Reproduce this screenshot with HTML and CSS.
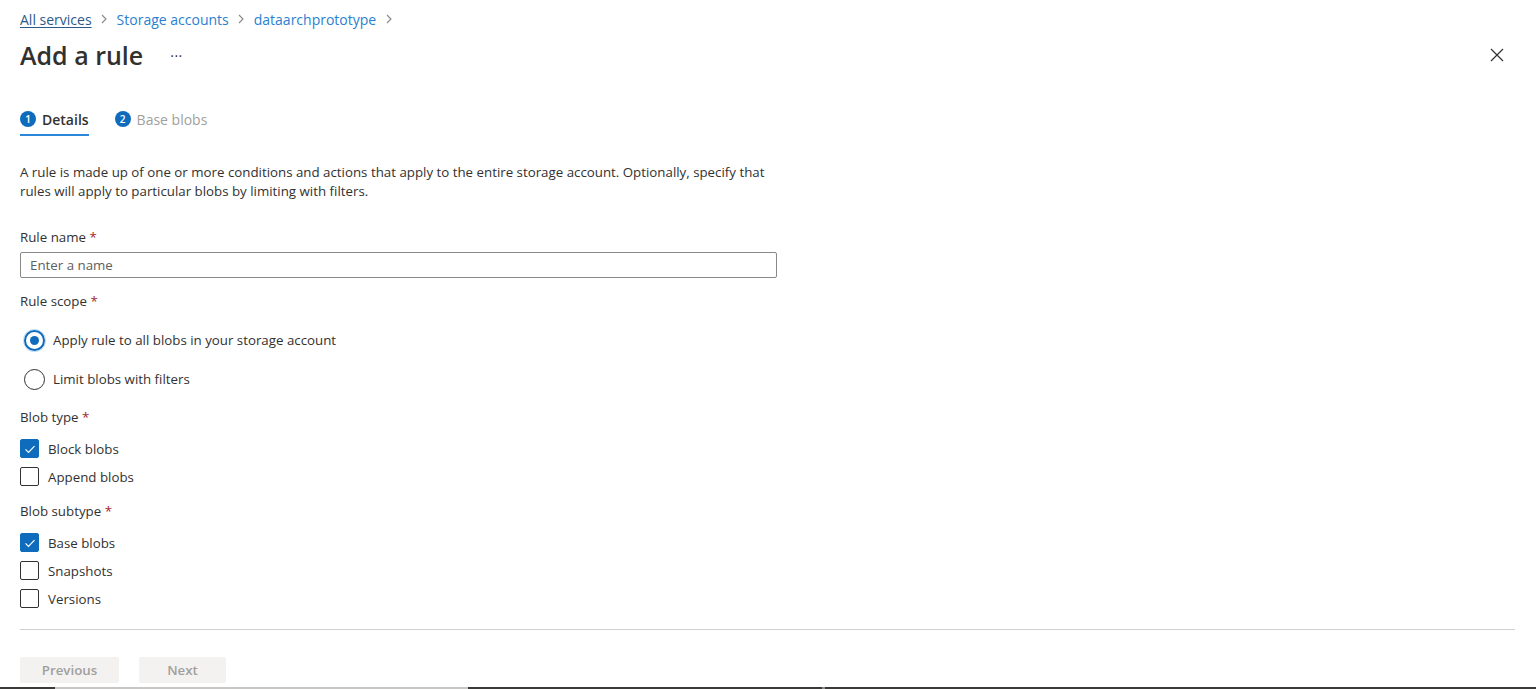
FILE: index.html
```html
<!DOCTYPE html>
<html>
<head>
<meta charset="utf-8">
<link rel="stylesheet" href="styles.css">
</head>
<body>
<div class="page">
  <nav class="crumbs">
    <a class="crumb first">All services</a><span class="chev"><svg width="8" height="10" viewBox="0 0 8 10"><path d="M2 1l4 4-4 4" fill="none" stroke="#8a8886" stroke-width="1.1"/></svg></span>
    <a class="crumb">Storage accounts</a><span class="chev"><svg width="8" height="10" viewBox="0 0 8 10"><path d="M2 1l4 4-4 4" fill="none" stroke="#8a8886" stroke-width="1.1"/></svg></span>
    <a class="crumb">dataarchprototype</a><span class="chev"><svg width="8" height="10" viewBox="0 0 8 10"><path d="M2 1l4 4-4 4" fill="none" stroke="#8a8886" stroke-width="1.1"/></svg></span>
  </nav>
  <header class="titlebar">
    <h1 class="title">Add a rule</h1>
    <span class="more">···</span>
    <span class="spacer"></span>
    <svg class="close" width="14" height="14" viewBox="0 0 14 14"><path d="M1 1l12 12M13 1L1 13" stroke="#323130" stroke-width="1.2"/></svg>
  </header>
  <div class="tabs">
    <div class="tab active"><span class="num">1</span><span class="tlabel">Details</span></div>
    <div class="tab"><span class="num">2</span><span class="tlabel">Base blobs</span></div>
  </div>
  <p class="desc">A rule is made up of one or more conditions and actions that apply to the entire storage account. Optionally, specify that rules will apply to particular blobs by limiting with filters.</p>

  <div class="label first">Rule name <span class="req">*</span></div>
  <div class="input">Enter a name</div>

  <div class="label scope">Rule scope <span class="req">*</span></div>
  <div class="radios">
    <div class="radio"><span class="dot on"></span><span>Apply rule to all blobs in your storage account</span></div>
    <div class="radio"><span class="dot"></span><span>Limit blobs with filters</span></div>
  </div>

  <div class="label grp">Blob type <span class="req">*</span></div>
  <div class="checks">
    <div class="check"><span class="box on"><svg width="14" height="14" viewBox="0 0 14 14"><path d="M2.5 7.3l3 3 6-6.2" fill="none" stroke="#fff" stroke-width="1.2"/></svg></span><span>Block blobs</span></div>
    <div class="check"><span class="box"></span><span>Append blobs</span></div>
  </div>

  <div class="label grp2">Blob subtype <span class="req">*</span></div>
  <div class="checks">
    <div class="check"><span class="box on"><svg width="14" height="14" viewBox="0 0 14 14"><path d="M2.5 7.3l3 3 6-6.2" fill="none" stroke="#fff" stroke-width="1.2"/></svg></span><span>Base blobs</span></div>
    <div class="check"><span class="box"></span><span>Snapshots</span></div>
    <div class="check"><span class="box"></span><span>Versions</span></div>
  </div>

  <hr class="sep">
  <div class="buttons">
    <button class="btn prev">Previous</button>
    <button class="btn next">Next</button>
  </div>
</div>
<div class="hscroll"><span class="s1"></span><span class="s2"></span><span class="s3"></span><span class="s4"></span><span class="s5"></span></div>
</body>
</html>
```
FILE: styles.css
```css
* { box-sizing: border-box; }
html, body { margin: 0; padding: 0; background: #fff; height: 689px; overflow: hidden; }
body { font-family: "Open Sans", "Noto Sans", sans-serif; color: #323130; font-size: 13px; }
.page { padding: 0 21px 0 20px; }
.crumbs { display: flex; align-items: center; height: 20px; margin-top: 9px; font-size: 14px; }
.crumb { color: #2a7fd0; text-decoration: none; }
.crumb.first { color: #2b5a8a; text-decoration: underline; text-underline-offset: 2px; }
.chev { display: inline-flex; width: 25px; justify-content: center; align-items: center; }
.titlebar { display: flex; align-items: center; height: 34px; margin-top: 9px; }
.title { margin: 0; font-size: 25px; font-weight: 600; color: #323130; letter-spacing: 0; }
.more { margin-left: 27px; font-size: 14px; color: #323130; letter-spacing: 0.5px; }
.spacer { flex: 1; }
.close { margin-right: 11px; }
.tabs { display: flex; gap: 26px; margin-top: 33px; }
.tab { display: flex; align-items: center; height: 31px; gap: 6px; border-bottom: 2px solid transparent; padding-bottom: 1px; }
.tab.active { border-bottom-color: #2b88d8; }
.num { width: 16px; height: 16px; border-radius: 50%; background: #0f6cbd; color: #fff; font-size: 10px; display: inline-flex; align-items: center; justify-content: center; font-weight: 600; }
.tlabel { font-size: 14px; color: #a19f9d; }
.tab.active .tlabel { font-weight: 600; color: #323130; }
.desc { margin: 27px 0 0; width: 760px; line-height: 19px; font-size: 13.3px; }
.label { margin-top: 26px; line-height: 18px; font-size: 13.3px; }
.label.first { margin-top: 27px; }
.req { color: #a4262c; }
.input { margin-top: 6px; width: 757px; height: 26px; border: 1px solid #8a8886; border-radius: 2px; padding: 0 9px; line-height: 24px; color: #605e5c; font-size: 13.3px; }
.label.scope { margin-top: 14px; }
.radios { display: flex; flex-direction: column; gap: 19px; margin-top: 20px; }
.radio { display: flex; align-items: center; gap: 8px; padding-left: 4px; height: 20px; font-size: 13.3px; }
.dot { width: 21px; height: 21px; border-radius: 50%; border: 1px solid #323130; display: inline-flex; align-items: center; justify-content: center; flex: none; }
.dot.on { border: 2px solid #0f6cbd; box-shadow: 0 0 0 1px #c7e0f4; }
.dot.on::after { content: ""; width: 9px; height: 9px; border-radius: 50%; background: #0f6cbd; }
.label.grp { margin-top: 19px; }
.label.grp2 { margin-top: 16px; }
.checks { display: flex; flex-direction: column; gap: 9px; margin-top: 13px; }
.check { display: flex; align-items: center; gap: 9px; height: 19px; font-size: 13.3px; }
.box { width: 19px; height: 19px; border: 1px solid #323130; border-radius: 2px; display: inline-flex; align-items: center; justify-content: center; flex: none; }
.box.on { background: #0f6cbd; border-color: #0f6cbd; }
.sep { margin: 21px 0 0; border: 0; border-top: 1px solid #d2d0ce; }
.buttons { display: flex; gap: 20px; margin-top: 27px; }
.btn { height: 26px; border: 0; border-radius: 2px; background: #f3f2f1; color: #a19f9d; font-family: inherit; font-size: 13.3px; font-weight: 600; padding: 0; }
.btn.prev { width: 99px; }
.btn.next { width: 87px; }
.hscroll { position: fixed; left: 0; right: 0; bottom: 0; height: 2px; display: flex; }
.hscroll span { display: block; height: 2px; }
.s1 { width: 55px; background: #3b3a39; }
.s2 { width: 413px; background: #c8c6c4; }
.s3 { width: 354px; background: #3b3a39; }
.s4 { width: 3px; background: #8a8886; }
.s5 { flex: 1; background: #3b3a39; }
```
